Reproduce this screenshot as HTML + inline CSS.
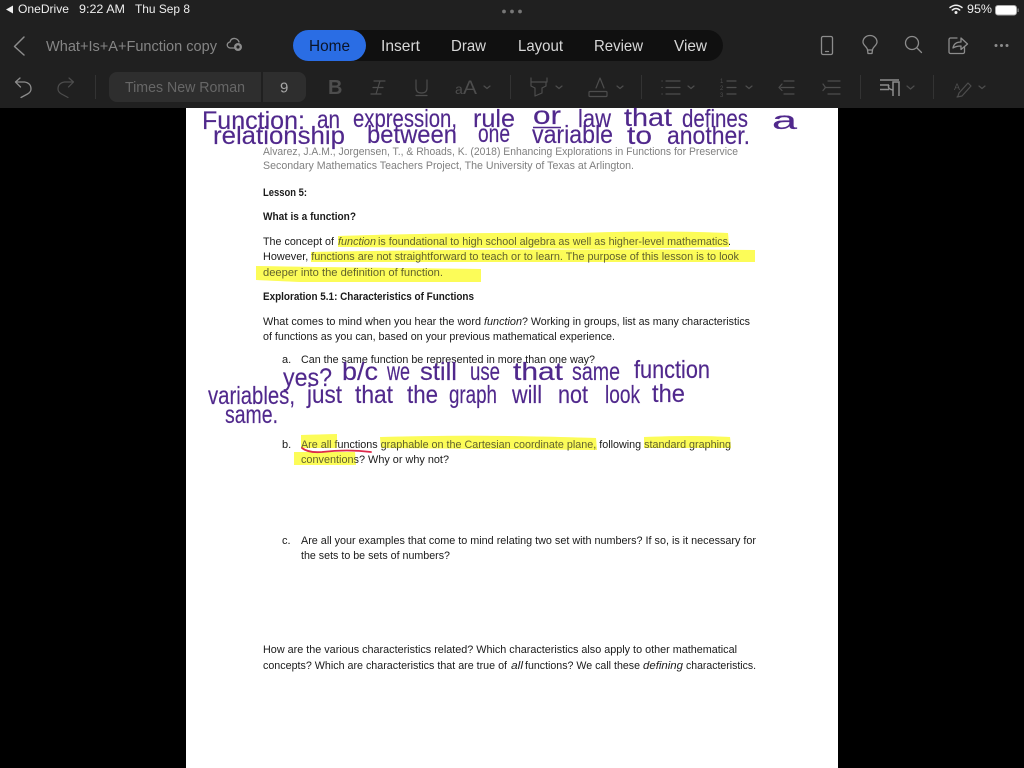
<!DOCTYPE html>
<html><head><meta charset="utf-8"><title>What+Is+A+Function copy</title>
<style>
html,body{margin:0;padding:0;width:1024px;height:768px;overflow:hidden;background:#000}
svg{display:block}
text{font-family:"Liberation Sans",sans-serif}
.b text{font-size:11px;fill:#1a1a1a}
.g text{font-size:11px;fill:#808080}
.h text{font-size:25px;fill:#50288c;stroke:#50288c;stroke-width:.15}
.ui text{font-size:16px}
.i{fill:none;stroke:#8c8c8c;stroke-width:1.3;stroke-linecap:round;stroke-linejoin:round}
.d{fill:none;stroke:#4d4d4d;stroke-width:1.2;stroke-linecap:round;stroke-linejoin:round}
</style></head><body>
<svg width="1024" height="768" viewBox="0 0 1024 768" xmlns="http://www.w3.org/2000/svg">
<rect width="1024" height="108" fill="#202020"/>
<rect y="108" width="1024" height="660" fill="#000"/>
<rect x="186" y="108" width="652" height="660" fill="#fff"/>

<!-- status bar -->
<path d="M6 9.500l7-4v8z" fill="#eee"/>
<g fill="#eee" font-size="12">
<text x="18" y="13" textLength="51" lengthAdjust="spacingAndGlyphs">OneDrive</text>
<text x="79" y="13" textLength="46" lengthAdjust="spacingAndGlyphs">9:22 AM</text>
<text x="135" y="13" textLength="55" lengthAdjust="spacingAndGlyphs">Thu Sep 8</text>
<text x="967" y="13" textLength="25" lengthAdjust="spacingAndGlyphs">95%</text>
</g>
<g fill="#777"><circle cx="504" cy="11.500" r="1.900"/><circle cx="512" cy="11.500" r="1.900"/><circle cx="520" cy="11.500" r="1.900"/></g>
<g fill="none" stroke="#eee" stroke-width="1.500" stroke-linecap="round"><path d="M950 7.500q6-4.500 12 0"/><path d="M952.300 10q3.700-3 7.400 0"/></g>
<circle cx="956" cy="12.500" r="1.500" fill="#eee"/>
<rect x="995.500" y="5.500" width="21" height="9.500" rx="2.500" fill="#fff" stroke="#aaa"/>
<rect x="1017.500" y="8.500" width="1.200" height="3.500" fill="#888"/>

<!-- title row -->
<path d="M24 37l-9.500 9.500L24 55" fill="none" stroke="#8c8c8c" stroke-width="1.500" stroke-linecap="round" stroke-linejoin="round"/>
<text x="46" y="51" font-size="15" fill="#858585" textLength="171" lengthAdjust="spacingAndGlyphs">What+Is+A+Function copy</text>
<path class="i" d="M236 48h-5.500a3 3 0 0 1-.5-6q1-4 5-3.500q3 .5 4 3.500" stroke-width="1.100"/>
<circle cx="238" cy="47" r="4" fill="#8c8c8c"/><circle cx="238" cy="47" r="1.600" fill="#202020"/>

<rect x="293" y="30" width="430" height="31" rx="15.500" fill="#101010"/>
<rect x="293" y="30" width="73" height="31" rx="15.500" fill="#2a6de4"/>
<g class="ui">
<text x="309" y="51" fill="#0a1428" textLength="41" lengthAdjust="spacingAndGlyphs">Home</text>
<g fill="#d8d8d8">
<text x="381" y="51" textLength="39" lengthAdjust="spacingAndGlyphs">Insert</text>
<text x="451" y="51" textLength="35" lengthAdjust="spacingAndGlyphs">Draw</text>
<text x="518" y="51" textLength="45" lengthAdjust="spacingAndGlyphs">Layout</text>
<text x="594" y="51" textLength="49" lengthAdjust="spacingAndGlyphs">Review</text>
<text x="674" y="51" textLength="33" lengthAdjust="spacingAndGlyphs">View</text>
</g></g>

<!-- right icons -->
<rect class="i" x="821.500" y="36.500" width="11" height="18" rx="1.500"/><path class="i" d="M825.500 51.500h3"/>
<path class="i" d="M867.500 50c0-3-4.500-4.500-4.500-8a7 6.500 0 0 1 14 0c0 3.500-4.500 5-4.500 8zM867.500 50l.5 3.500h4l.5-3.500"/>
<circle class="i" cx="912" cy="43" r="6.500"/><path class="i" d="M917 48l4.500 4.500"/>
<path class="i" d="M957 38h-6.500a1.500 1.500 0 0 0-1.500 1.500v12.500a1.500 1.500 0 0 0 1.500 1.500h12.500a1.500 1.500 0 0 0 1.500-1.500v-5"/>
<path class="i" d="M953 48q1-6 8-6v-4l6.500 6-6.500 5.500v-3.500q-5 0-8 2z"/>
<g fill="#8c8c8c"><circle cx="996" cy="45.500" r="1.500"/><circle cx="1001.500" cy="45.500" r="1.500"/><circle cx="1007" cy="45.500" r="1.500"/></g>

<!-- ribbon -->
<path class="i" d="M20 78l-4.500 4 5 5M15.500 82h9q6.500 1 6.500 7 0 3-3.500 5l-6.500 3.500"/>
<path class="d" d="M69 78l4.500 4-5 5M73.500 82h-9q-6.500 1-6.500 7 0 3 3.500 5l6.500 3.500"/>
<path d="M95.500 75v24M510.500 75v24M641.500 75v24M860.500 75v24M933.500 75v24" stroke="#333" stroke-width="1"/>
<path d="M109 80a8 8 0 0 1 8-8h144v30H117a8 8 0 0 1-8-8z" fill="#2e2e2e"/>
<path d="M263 72h35a8 8 0 0 1 8 8v14a8 8 0 0 1-8 8h-35z" fill="#2e2e2e"/>
<text x="125" y="92" font-size="15" fill="#676767" textLength="120" lengthAdjust="spacingAndGlyphs">Times New Roman</text>
<text x="280" y="92.500" font-size="15" fill="#a8a8a8">9</text>
<text x="328" y="94" font-size="20" font-weight="bold" fill="#4d4d4d">B</text>
<path class="d" d="M374 81h11M371 94h10M380 81l-4 13M373 87.500h10"/>
<path class="d" d="M416 80v8q0 5 5.500 5t5.500-5v-8M416 95.500h11"/>
<text x="455" y="94" font-size="14" fill="#4d4d4d">a</text>
<text x="463" y="94" font-size="19" fill="#4d4d4d" textLength="14" lengthAdjust="spacingAndGlyphs">A</text>
<path class="d" d="M484 86l3 2.500 3-2.500M556 86l3 2.500 3-2.500M617 86l3 2.500 3-2.500M688 86l3 2.500 3-2.500M746 86l3 2.500 3-2.500M907 86l3.500 3 3.500-3M979 86l3 2.500 3-2.500"/>
<path class="d" d="M531 78v4h16v-4M531 82v4l4 2v8l7-3v-5l4-2v-4"/>
<path class="d" d="M596 88l4-10 4 10M590 91.500h16a1 1 0 0 1 1 1v3a1 1 0 0 1-1 1h-16a1 1 0 0 1-1-1v-3a1 1 0 0 1 1-1z"/>
<path class="d" d="M662 81h.1M662 87.500h.1M662 94h.1M666 81h14M666 87.500h14M666 94h14M727 81h9M727 87.500h9M727 94h9M784 81h10M781 87.500h13M784 94h10M782 84l-3 3.500 3 3M828 81h12M825 87.500h15M828 94h12M823 84l2.500 3.500-2.500 3"/>
<text x="720" y="83" font-size="6" fill="#4d4d4d">1</text><text x="720" y="90" font-size="6" fill="#4d4d4d">2</text><text x="720" y="97" font-size="6" fill="#4d4d4d">3</text>
<path d="M880 80h19M880 85h9M880 89.500h9M893 96V82h6v14M889 85q-2 4 4 5" fill="none" stroke="#8c8c8c" stroke-width="1.500"/>
<text x="954" y="90" font-size="9" fill="#4d4d4d">A</text><path class="d" d="M958 96l-1 1 5-1 9-10-3-3-9 10z"/>

<!-- document -->
<g class="g">
<text x="263" y="155" textLength="475" lengthAdjust="spacingAndGlyphs">Alvarez, J.A.M., Jorgensen, T., &amp; Rhoads, K. (2018) Enhancing Explorations in Functions for Preservice</text>
<text x="263" y="169" textLength="371" lengthAdjust="spacingAndGlyphs">Secondary Mathematics Teachers Project, The University of Texas at Arlington.</text>
</g>
<!-- highlights under text -->
<g fill="#fcfc58">
<path d="M338 236q120-4 240-3 80-3 150 0l1 14-130 2-85-1-176-1z"/>
<path d="M311 252q220-4 444-2v12H311z"/>
<path d="M256 266l60 1 165 2v13H300l-44-2z"/>
<path d="M301 435l36-1v14h-36zM380 437q100-3 216 1l1 12-216-2zM644 437q50-2 86 0l1 11h-87zM294 452h61l1 13h-62z"/>
</g>
<g class="b">
<text x="263" y="196" font-weight="bold" textLength="44" lengthAdjust="spacingAndGlyphs">Lesson 5:</text>
<text x="263" y="220" font-weight="bold" textLength="93" lengthAdjust="spacingAndGlyphs">What is a function?</text>
<text x="263" y="245" textLength="71" lengthAdjust="spacingAndGlyphs">The concept of</text>
<text x="338" y="245" font-style="italic" textLength="38" lengthAdjust="spacingAndGlyphs">function</text>
<text x="378" y="245" textLength="353" lengthAdjust="spacingAndGlyphs">is foundational to high school algebra as well as higher-level mathematics.</text>
<text x="263" y="260" textLength="476" lengthAdjust="spacingAndGlyphs">However, functions are not straightforward to teach or to learn. The purpose of this lesson is to look</text>
<text x="263" y="276" textLength="180" lengthAdjust="spacingAndGlyphs">deeper into the definition of function.</text>
<text x="263" y="300" font-weight="bold" textLength="211" lengthAdjust="spacingAndGlyphs">Exploration 5.1: Characteristics of Functions</text>
<text x="263" y="325" textLength="218" lengthAdjust="spacingAndGlyphs">What comes to mind when you hear the word</text>
<text x="484" y="325" font-style="italic" textLength="38" lengthAdjust="spacingAndGlyphs">function</text>
<text x="522" y="325" textLength="228" lengthAdjust="spacingAndGlyphs">? Working in groups, list as many characteristics</text>
<text x="263" y="340" textLength="352" lengthAdjust="spacingAndGlyphs">of functions as you can, based on your previous mathematical experience.</text>
<text x="282" y="363">a.</text>
<text x="301" y="363" textLength="294" lengthAdjust="spacingAndGlyphs">Can the same function be represented in more than one way?</text>
<text x="282" y="448">b.</text>
<text x="301" y="448" textLength="430" lengthAdjust="spacingAndGlyphs">Are all functions graphable on the Cartesian coordinate plane, following standard graphing</text>
<text x="301" y="463" textLength="148" lengthAdjust="spacingAndGlyphs">conventions? Why or why not?</text>
<text x="282" y="544">c.</text>
<text x="301" y="544" textLength="455" lengthAdjust="spacingAndGlyphs">Are all your examples that come to mind relating two set with numbers? If so, is it necessary for</text>
<text x="301" y="559" textLength="149" lengthAdjust="spacingAndGlyphs">the sets to be sets of numbers?</text>
<text x="263" y="653" textLength="474" lengthAdjust="spacingAndGlyphs">How are the various characteristics related? Which characteristics also apply to other mathematical</text>
<text x="263" y="669" textLength="244" lengthAdjust="spacingAndGlyphs">concepts? Which are characteristics that are true of</text>
<text x="511" y="669" font-style="italic" textLength="12" lengthAdjust="spacingAndGlyphs">all</text>
<text x="525" y="669" textLength="115" lengthAdjust="spacingAndGlyphs">functions? We call these</text>
<text x="643" y="669" font-style="italic" textLength="40" lengthAdjust="spacingAndGlyphs">defining</text>
<text x="686" y="669" textLength="70" lengthAdjust="spacingAndGlyphs">characteristics.</text>
</g>

<!-- highlight tint over text -->
<g fill="#fcfc58" opacity=".3">
<path d="M338 236q120-4 240-3 80-3 150 0l1 14-130 2-85-1-176-1z"/>
<path d="M311 252q220-4 444-2v12H311z"/>
<path d="M256 266l60 1 165 2v13H300l-44-2z"/>
<path d="M301 435l36-1v14h-36zM380 437q100-3 216 1l1 12-216-2zM644 437q50-2 86 0l1 11h-87zM294 452h61l1 13h-62z"/>
</g>
<path d="M302 448q6 5 20 4 25-3 49 0" fill="none" stroke="#dd2a4a" stroke-width="1.800" stroke-linecap="round"/>

<!-- handwriting -->
<g class="h">
<text x="202" y="129" textLength="103" lengthAdjust="spacingAndGlyphs">Function:</text>
<text x="317" y="128" textLength="23" lengthAdjust="spacingAndGlyphs">an</text>
<text x="353" y="127" textLength="104" lengthAdjust="spacingAndGlyphs">expression,</text>
<text x="473" y="127" textLength="42" lengthAdjust="spacingAndGlyphs">rule</text>
<text x="533" y="124" textLength="28" lengthAdjust="spacingAndGlyphs">or</text>
<text x="578" y="127" textLength="33" lengthAdjust="spacingAndGlyphs">law</text>
<text x="624" y="126" textLength="48" lengthAdjust="spacingAndGlyphs">that</text>
<text x="682" y="127" textLength="66" lengthAdjust="spacingAndGlyphs">defines</text>
<text x="772" y="129" textLength="25" lengthAdjust="spacingAndGlyphs">a</text>
<text x="213" y="144" textLength="132" lengthAdjust="spacingAndGlyphs">relationship</text>
<text x="367" y="143" textLength="90" lengthAdjust="spacingAndGlyphs">between</text>
<text x="478" y="142" textLength="32" lengthAdjust="spacingAndGlyphs">one</text>
<text x="532" y="143" textLength="81" lengthAdjust="spacingAndGlyphs">variable</text>
<text x="627" y="144" textLength="25" lengthAdjust="spacingAndGlyphs">to</text>
<text x="667" y="144" textLength="83" lengthAdjust="spacingAndGlyphs">another.</text>
<text x="283" y="386" textLength="49" lengthAdjust="spacingAndGlyphs">yes?</text>
<text x="342" y="380" textLength="36" lengthAdjust="spacingAndGlyphs">b/c</text>
<text x="387" y="380" textLength="23" lengthAdjust="spacingAndGlyphs">we</text>
<text x="420" y="380" textLength="37" lengthAdjust="spacingAndGlyphs">still</text>
<text x="470" y="380" textLength="30" lengthAdjust="spacingAndGlyphs">use</text>
<text x="513" y="380" textLength="50" lengthAdjust="spacingAndGlyphs">that</text>
<text x="572" y="380" textLength="48" lengthAdjust="spacingAndGlyphs">same</text>
<text x="634" y="378" textLength="76" lengthAdjust="spacingAndGlyphs">function</text>
<text x="208" y="404" textLength="87" lengthAdjust="spacingAndGlyphs">variables,</text>
<text x="307" y="403" textLength="35" lengthAdjust="spacingAndGlyphs">just</text>
<text x="355" y="403" textLength="38" lengthAdjust="spacingAndGlyphs">that</text>
<text x="407" y="403" textLength="31" lengthAdjust="spacingAndGlyphs">the</text>
<text x="449" y="403" textLength="48" lengthAdjust="spacingAndGlyphs">graph</text>
<text x="512" y="403" textLength="30" lengthAdjust="spacingAndGlyphs">will</text>
<text x="558" y="403" textLength="30" lengthAdjust="spacingAndGlyphs">not</text>
<text x="605" y="403" textLength="35" lengthAdjust="spacingAndGlyphs">look</text>
<text x="652" y="402" textLength="33" lengthAdjust="spacingAndGlyphs">the</text>
<text x="225" y="423" textLength="53" lengthAdjust="spacingAndGlyphs">same.</text>
</g>
<path d="M533 127.500h28" stroke="#50288c" stroke-width="1.500" fill="none"/>
</svg>
</body></html>
